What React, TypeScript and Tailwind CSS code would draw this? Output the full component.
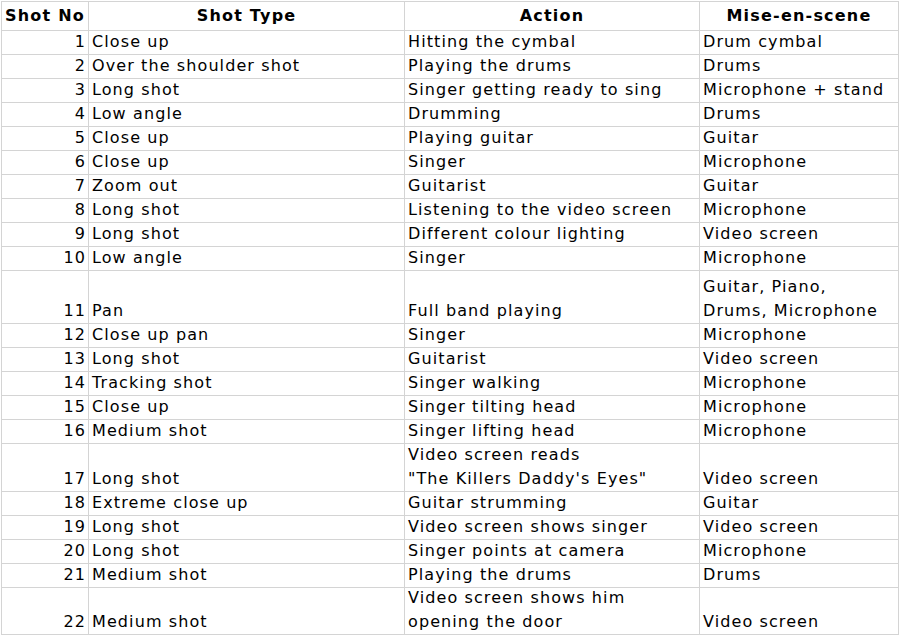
import React from 'react'

type Shot = {
  no: number
  type: string
  action: string[]
  scene: string[]
  h?: string
}

const shots: Shot[] = [
  { no: 1, type: 'Close up', action: ['Hitting the cymbal'], scene: ['Drum cymbal'] },
  { no: 2, type: 'Over the shoulder shot', action: ['Playing the drums'], scene: ['Drums'] },
  { no: 3, type: 'Long shot', action: ['Singer getting ready to sing'], scene: ['Microphone + stand'] },
  { no: 4, type: 'Low angle', action: ['Drumming'], scene: ['Drums'] },
  { no: 5, type: 'Close up', action: ['Playing guitar'], scene: ['Guitar'] },
  { no: 6, type: 'Close up', action: ['Singer'], scene: ['Microphone'] },
  { no: 7, type: 'Zoom out', action: ['Guitarist'], scene: ['Guitar'] },
  { no: 8, type: 'Long shot', action: ['Listening to the video screen'], scene: ['Microphone'] },
  { no: 9, type: 'Long shot', action: ['Different colour lighting'], scene: ['Video screen'] },
  { no: 10, type: 'Low angle', action: ['Singer'], scene: ['Microphone'] },
  {
    no: 11,
    type: 'Pan',
    action: ['Full band playing'],
    scene: ['Guitar, Piano,', 'Drums, Microphone'],
    h: 'h-[53px]',
  },
  { no: 12, type: 'Close up pan', action: ['Singer'], scene: ['Microphone'] },
  { no: 13, type: 'Long shot', action: ['Guitarist'], scene: ['Video screen'] },
  { no: 14, type: 'Tracking shot', action: ['Singer walking'], scene: ['Microphone'] },
  { no: 15, type: 'Close up', action: ['Singer tilting head'], scene: ['Microphone'] },
  { no: 16, type: 'Medium shot', action: ['Singer lifting head'], scene: ['Microphone'] },
  {
    no: 17,
    type: 'Long shot',
    action: ['Video screen reads', '"The Killers Daddy\'s Eyes"'],
    scene: ['Video screen'],
    h: 'h-[48px]',
  },
  { no: 18, type: 'Extreme close up', action: ['Guitar strumming'], scene: ['Guitar'] },
  { no: 19, type: 'Long shot', action: ['Video screen shows singer'], scene: ['Video screen'] },
  { no: 20, type: 'Long shot', action: ['Singer points at camera'], scene: ['Microphone'] },
  { no: 21, type: 'Medium shot', action: ['Playing the drums'], scene: ['Drums'] },
  {
    no: 22,
    type: 'Medium shot',
    action: ['Video screen shows him', 'opening the door'],
    scene: ['Video screen'],
    h: 'h-[47px]',
  },
]

const cell = 'border-r border-b border-[#d4d4d4] flex flex-col justify-end leading-[24px] whitespace-nowrap overflow-hidden'
const head = `${cell} h-[29px] items-center font-bold leading-[29px] tracking-[1.2px]`

export default function App() {
  return (
    <div className="min-h-screen bg-white pt-[1px] pl-[1px] text-black text-[16px] tracking-[1.1px] font-['DejaVu_Sans',Verdana,sans-serif]">
      <div className="grid grid-cols-[87px_316px_295px_199px] w-fit border-l border-t border-[#d4d4d4]">
        <div className={head}>Shot No</div>
        <div className={head}>Shot Type</div>
        <div className={head}>Action</div>
        <div className={head}>Mise-en-scene</div>

        {shots.map((s) => (
          <React.Fragment key={s.no}>
            <div className={`${cell} ${s.h ?? 'h-[24px]'} items-end pr-[2px]`}>{s.no}</div>
            <div className={`${cell} ${s.h ?? 'h-[24px]'} pl-[3px]`}>{s.type}</div>
            <div className={`${cell} ${s.h ?? 'h-[24px]'} pl-[3px]`}>
              {s.action.map((line) => (
                <span key={line}>{line}</span>
              ))}
            </div>
            <div className={`${cell} ${s.h ?? 'h-[24px]'} pl-[3px]`}>
              {s.scene.map((line) => (
                <span key={line}>{line}</span>
              ))}
            </div>
          </React.Fragment>
        ))}
      </div>
    </div>
  )
}
